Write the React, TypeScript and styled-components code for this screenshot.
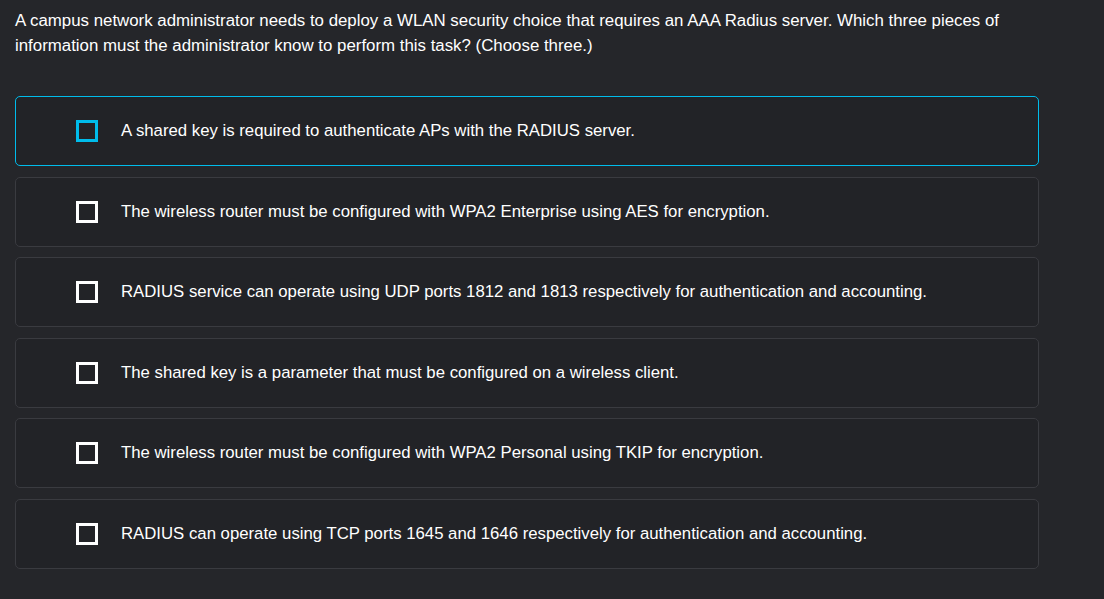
import React, { useState } from 'react';
import styled, { createGlobalStyle } from 'styled-components';

const GlobalStyle = createGlobalStyle`
  html, body {
    margin: 0;
    padding: 0;
    background: #25262a;
  }
  * {
    box-sizing: border-box;
  }
`;

const Page = styled.div`
  width: 1104px;
  min-height: 599px;
  padding: 8px 65px 0 15px;
  font-family: "Liberation Sans", Arial, sans-serif;
  color: #ffffff;
`;

const Question = styled.p`
  margin: 0 0 38px;
  font-size: 16.85px;
  line-height: 25px;
`;

const Options = styled.div`
  display: flex;
  flex-direction: column;
  gap: 10.6px;
`;

const Option = styled.label<{ $active: boolean }>`
  display: flex;
  align-items: center;
  height: 70px;
  padding-left: 60px;
  border: 1px solid ${(p) => (p.$active ? '#00bceb' : '#3a3b40')};
  border-radius: 5px;
  background: #222327;
  cursor: pointer;
`;

const Box = styled.span<{ $active: boolean }>`
  flex: none;
  width: 22px;
  height: 22px;
  border: 3px solid ${(p) => (p.$active ? '#00bceb' : '#ffffff')};
  margin-right: 23px;
`;

const Text = styled.span`
  font-size: 16.75px;
  line-height: 20px;
`;

const answers = [
  'A shared key is required to authenticate APs with the RADIUS server.',
  'The wireless router must be configured with WPA2 Enterprise using AES for encryption.',
  'RADIUS service can operate using UDP ports 1812 and 1813 respectively for authentication and accounting.',
  'The shared key is a parameter that must be configured on a wireless client.',
  'The wireless router must be configured with WPA2 Personal using TKIP for encryption.',
  'RADIUS can operate using TCP ports 1645 and 1646 respectively for authentication and accounting.',
];

export default function App() {
  const [focused, setFocused] = useState(0);

  return (
    <>
      <GlobalStyle />
      <Page>
        <Question>
          A campus network administrator needs to deploy a WLAN security choice that requires an AAA Radius
          server. Which three pieces of information must the administrator know to perform this task? (Choose
          three.)
        </Question>
        <Options>
          {answers.map((a, i) => (
            <Option key={i} $active={focused === i} onClick={() => setFocused(i)}>
              <Box $active={focused === i} />
              <Text>{a}</Text>
            </Option>
          ))}
        </Options>
      </Page>
    </>
  );
}
